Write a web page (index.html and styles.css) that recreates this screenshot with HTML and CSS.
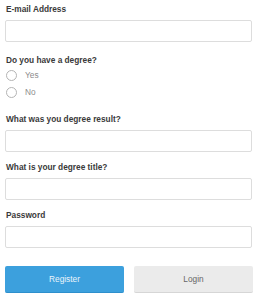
FILE: index.html
```html
<!DOCTYPE html>
<html lang="en">
<head>
    <meta charset="UTF-8">
    <meta name="viewport" content="width=device-width, initial-scale=1.0">
    <title>Register</title>
    <link rel="stylesheet" href="styles.css">
</head>
<body>
    <form class="form">

        <div class="field">
            <label class="label">E-mail Address</label>
            <input class="input" type="text">
        </div>

        <div class="field field-radio">
            <label class="label">Do you have a degree?</label>
            <div class="radio"><span class="circle"></span>Yes</div>
            <div class="radio"><span class="circle"></span>No</div>
        </div>

        <div class="field">
            <label class="label">What was you degree result?</label>
            <input class="input" type="text">
        </div>

        <div class="field">
            <label class="label">What is your degree title?</label>
            <input class="input" type="text">
        </div>

        <div class="field">
            <label class="label">Password</label>
            <input class="input" type="password">
        </div>

        <div class="buttons">
            <button type="button" class="btn btn-register">Register</button>
            <button type="button" class="btn btn-login">Login</button>
        </div>

    </form>
</body>
</html>
```

FILE: styles.css
```css
body {
    margin: 0;
    background: #fff;
    font-family: "Liberation Sans", Arial, sans-serif;
}

.form {
    width: 248px;
    padding: 4px 0 0 5px;
}

.field {
    margin-bottom: 10px;
}

.field-radio {
    margin-top: 13px;
    margin-bottom: 17px;
}

.label {
    display: block;
    font-size: 8.3px;
    line-height: 10px;
    font-weight: bold;
    color: #3a3a3a;
    margin: 0 0 6px 1px;
}

.input {
    display: block;
    box-sizing: border-box;
    width: 247px;
    height: 22px;
    margin: 0;
    border: 1px solid #ddd;
    border-radius: 2px;
    background: #fff;
    outline: none;
}

.field-radio .label {
    margin-bottom: 5px;
}

.radio {
    display: flex;
    align-items: center;
    height: 10px;
    margin-bottom: 7px;
    font-size: 8.3px;
    color: #8c8c8c;
}

.radio:last-child {
    margin-bottom: 0;
}

.circle {
    box-sizing: border-box;
    width: 11px;
    height: 11px;
    margin: 0 8px 0 1px;
    border: 1px solid #b4b4b4;
    border-radius: 50%;
}

.buttons {
    display: flex;
    gap: 10px;
    margin-top: 18px;
}

.btn {
    width: 119px;
    height: 27px;
    border: none;
    border-radius: 2px;
    font-family: "Liberation Sans", Arial, sans-serif;
    font-size: 8.3px;
    padding: 0;
}

.btn-register {
    background: #3ca0dd;
    color: #eaf4fb;
    border-bottom: 1px solid #2e8fcc;
}

.btn-login {
    background: #ebebeb;
    color: #666;
    border-bottom: 1px solid #d6d6d6;
}
```
